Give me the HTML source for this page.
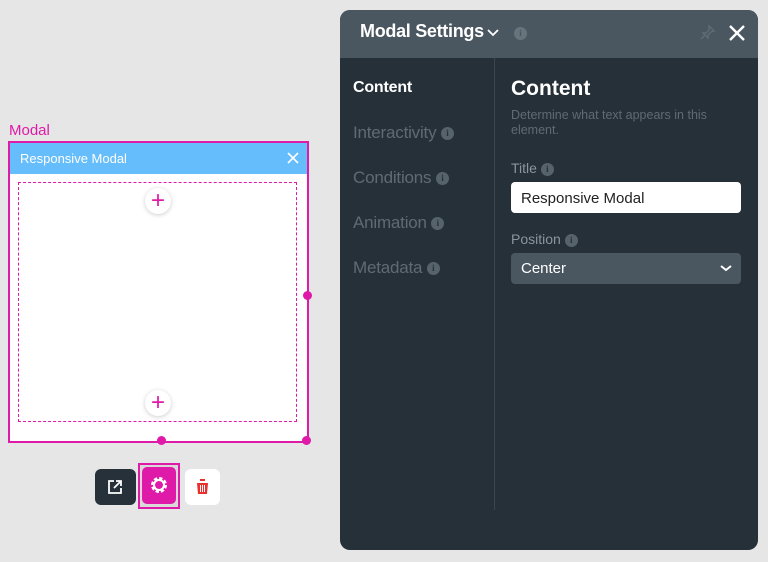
<!DOCTYPE html>
<html><head><style>
body{margin:0;width:768px;height:562px;background:#e6e6e6;font-family:"Liberation Sans",sans-serif;position:relative;overflow:hidden}
.a{position:absolute}
.info{display:inline-block;width:13px;height:13px;border-radius:50%;background:#56636b;color:#26313a;font-size:9px;font-weight:bold;text-align:center;line-height:13px;font-family:"Liberation Serif",serif;vertical-align:middle}
.nav{position:absolute;left:353px;color:#5f6b73;font-size:17px;letter-spacing:-0.2px}
</style></head><body>
<div class="a" style="left:9px;top:122px;color:#e01aa8;font-size:15px">Modal</div>
<div class="a" style="left:8px;top:141px;width:297px;height:298px;border:2px solid #e01aa8;background:#fff"></div>
<div class="a" style="left:10px;top:143px;width:297px;height:31px;background:#66bdfb"></div>
<div class="a" style="left:20px;top:151px;color:#fff;font-size:13px">Responsive Modal</div>
<svg class="a" style="left:287px;top:152px" width="12" height="12"><path d="M1 1l10 10M11 1L1 11" stroke="#fff" stroke-width="1.6"/></svg>
<div class="a" style="left:18px;top:182px;width:277px;height:238px;border:1px dashed #e01aa8"></div>
<div class="a" style="left:145px;top:188px;width:26px;height:26px;border-radius:50%;background:#fff;box-shadow:0 1px 5px rgba(0,0,0,.2);color:#e01aa8;font-size:24px;text-align:center;line-height:25px">+</div>
<div class="a" style="left:145px;top:390px;width:26px;height:26px;border-radius:50%;background:#fff;box-shadow:0 1px 5px rgba(0,0,0,.2);color:#e01aa8;font-size:24px;text-align:center;line-height:25px">+</div>
<div class="a" style="left:303px;top:291px;width:9px;height:9px;border-radius:50%;background:#e01aa8"></div>
<div class="a" style="left:157px;top:436px;width:9px;height:9px;border-radius:50%;background:#e01aa8"></div>
<div class="a" style="left:302px;top:436px;width:9px;height:9px;border-radius:50%;background:#e01aa8"></div>
<div class="a" style="left:95px;top:469px;width:41px;height:36px;border-radius:6px;background:#27313a">
<svg width="41" height="36"><path d="M19 12h-5v12h12v-5M21 12h5v5M26 12l-7 7" stroke="#fff" stroke-width="1.8" fill="none"/></svg></div>
<div class="a" style="left:138px;top:463px;width:42px;height:46px;border:2px solid #e01aa8;box-sizing:border-box;background:#d9d9d9"></div>
<div class="a" style="left:142px;top:467px;width:34px;height:37px;border-radius:5px;background:#e01aa8">
<svg width="34" height="37"><circle cx="17" cy="18" r="6" fill="none" stroke="#fff" stroke-width="4" stroke-dasharray="3 1.7"/><circle cx="17" cy="18" r="5" fill="none" stroke="#fff" stroke-width="2"/></svg></div>
<div class="a" style="left:185px;top:469px;width:35px;height:36px;border-radius:6px;background:#fff">
<svg width="35" height="36"><path d="M11 12h13M15 12v-2h5v2M12 14h11l-1 11h-9z" fill="#e8312f"/><path d="M15.5 16v7M17.5 16v7M19.5 16v7" stroke="#fff" stroke-width="1"/></svg></div>

<div class="a" style="left:340px;top:10px;width:418px;height:540px;border-radius:10px;background:#263038;overflow:hidden">
<div class="a" style="left:0;top:0;width:418px;height:48px;background:#4a5760"></div>
<div class="a" style="left:20px;top:11px;color:#fff;font-size:18px;font-weight:bold;letter-spacing:-0.3px">Modal Settings</div>
<svg class="a" style="left:147px;top:19px" width="12" height="8"><path d="M1 1l5 5 5-5" stroke="#fff" stroke-width="1.8" fill="none"/></svg>
<div class="a" style="left:174px;top:15px"><span class="info" style="background:#67747c;color:#4a5760">i</span></div>
<svg class="a" style="left:360px;top:14px" width="16" height="16"><path d="M9 2l5 5-3 1-3 3 0 3-5-5 3 0 3-3zM5 11l-4 4" stroke="#5f6c74" stroke-width="1.4" fill="none"/></svg>
<svg class="a" style="left:389px;top:15px" width="16" height="16"><path d="M1 1l14 14M15 1L1 15" stroke="#fff" stroke-width="2.4"/></svg>
<div class="a" style="left:154px;top:48px;width:1px;height:452px;background:#3b464e"></div>
</div>
<div class="nav" style="top:79px;color:#fff;font-weight:bold;font-size:16px">Content</div>
<div class="nav" style="top:123px">Interactivity <span class="info">i</span></div>
<div class="nav" style="top:168px">Conditions <span class="info">i</span></div>
<div class="nav" style="top:213px">Animation <span class="info">i</span></div>
<div class="nav" style="top:258px">Metadata <span class="info">i</span></div>
<div class="a" style="left:511px;top:77px;color:#fff;font-size:21px;font-weight:bold">Content</div>
<div class="a" style="left:511px;top:108px;color:#5f6b73;font-size:12.5px;line-height:15px;width:220px">Determine what text appears in this element.</div>
<div class="a" style="left:511px;top:160px;color:#8a959c;font-size:14px">Title <span class="info">i</span></div>
<div class="a" style="left:511px;top:182px;width:230px;height:31px;border-radius:4px;background:#fff"></div>
<div class="a" style="left:521px;top:190px;color:#222;font-size:15px">Responsive Modal</div>
<div class="a" style="left:511px;top:231px;color:#8a959c;font-size:14px">Position <span class="info">i</span></div>
<div class="a" style="left:511px;top:253px;width:230px;height:31px;border-radius:4px;background:#4a5760"></div>
<div class="a" style="left:521px;top:260px;color:#fff;font-size:15px">Center</div>
<svg class="a" style="left:719px;top:263px" width="14" height="10"><path d="M2 3l5 4 5-4" stroke="#fff" stroke-width="2" fill="none"/></svg>
</body></html>
